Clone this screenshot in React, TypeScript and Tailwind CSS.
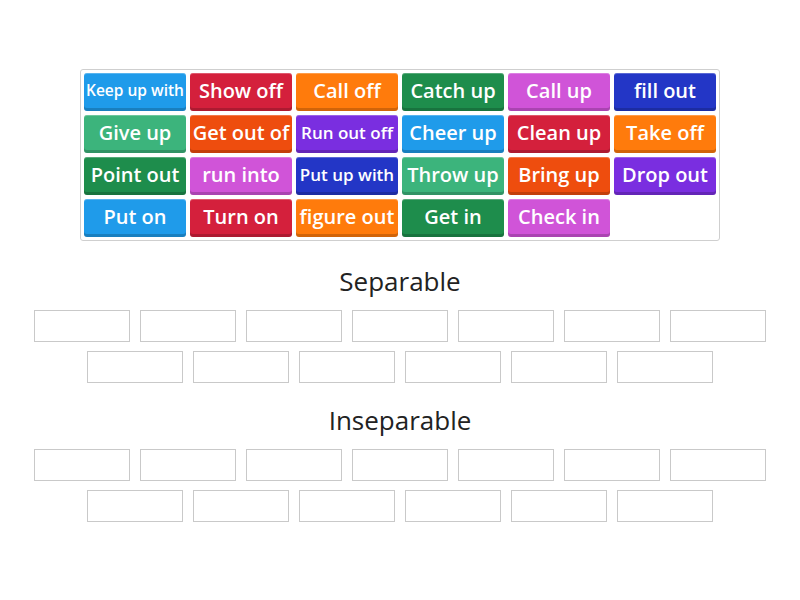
const colors: Record<string, string> = {
  blue: 'bg-[#1f9bea]',
  red: 'bg-[#d4203c]',
  orange: 'bg-[#ff7b0c]',
  green: 'bg-[#1e8d4c]',
  pink: 'bg-[#d054d8]',
  navy: 'bg-[#2336c6]',
  teal: 'bg-[#3cb47c]',
  flame: 'bg-[#ee4d0e]',
  purple: 'bg-[#7a2ee0]',
};

const tiles = [
  { t: 'Keep up with', c: 'blue', s: 'text-[15.5px]' },
  { t: 'Show off', c: 'red' },
  { t: 'Call off', c: 'orange' },
  { t: 'Catch up', c: 'green' },
  { t: 'Call up', c: 'pink' },
  { t: 'fill out', c: 'navy' },
  { t: 'Give up', c: 'teal' },
  { t: 'Get out of', c: 'flame' },
  { t: 'Run out off', c: 'purple', s: 'text-[17px]' },
  { t: 'Cheer up', c: 'blue' },
  { t: 'Clean up', c: 'red' },
  { t: 'Take off', c: 'orange' },
  { t: 'Point out', c: 'green' },
  { t: 'run into', c: 'pink' },
  { t: 'Put up with', c: 'navy', s: 'text-[17px]' },
  { t: 'Throw up', c: 'teal' },
  { t: 'Bring up', c: 'flame' },
  { t: 'Drop out', c: 'purple' },
  { t: 'Put on', c: 'blue' },
  { t: 'Turn on', c: 'red' },
  { t: 'figure out', c: 'orange' },
  { t: 'Get in', c: 'green' },
  { t: 'Check in', c: 'pink' },
];

function Slots() {
  return (
    <div className="flex flex-col items-center gap-[9px]">
      <div className="flex gap-[10px]">
        {Array.from({ length: 7 }).map((_, i) => (
          <div key={i} className="w-[96px] h-[32px] border border-[#c9c9c9] bg-white" />
        ))}
      </div>
      <div className="flex gap-[10px]">
        {Array.from({ length: 6 }).map((_, i) => (
          <div key={i} className="w-[96px] h-[32px] border border-[#c9c9c9] bg-white" />
        ))}
      </div>
    </div>
  );
}

export default function App() {
  return (
    <div className="w-[800px] h-[600px] bg-white pt-[69px] font-['Open_Sans',sans-serif]">
      {/* Tile bank */}
      <div className="mx-auto w-[640px] border border-[#cfcfcf] rounded-[3px] p-[3px] grid grid-cols-[repeat(6,102px)] auto-rows-[38px] gap-[4px]">
        {tiles.map((tile) => (
          <div
            key={tile.t}
            className={`${colors[tile.c]} ${tile.s ?? 'text-[20px]'} rounded-[3px] flex items-center justify-center text-white font-semibold whitespace-nowrap pb-[3px] shadow-[inset_0_-3px_0_rgba(0,0,0,0.18),inset_0_1px_0_rgba(255,255,255,0.25)]`}
          >
            {tile.t}
          </div>
        ))}
      </div>

      <h2 className="mt-[23px] mb-[12px] text-center text-[26px] leading-[34px] text-[#222]">Separable</h2>
      <Slots />

      <h2 className="mt-[20px] mb-[12px] text-center text-[26px] leading-[34px] text-[#222]">Inseparable</h2>
      <Slots />
    </div>
  );
}
